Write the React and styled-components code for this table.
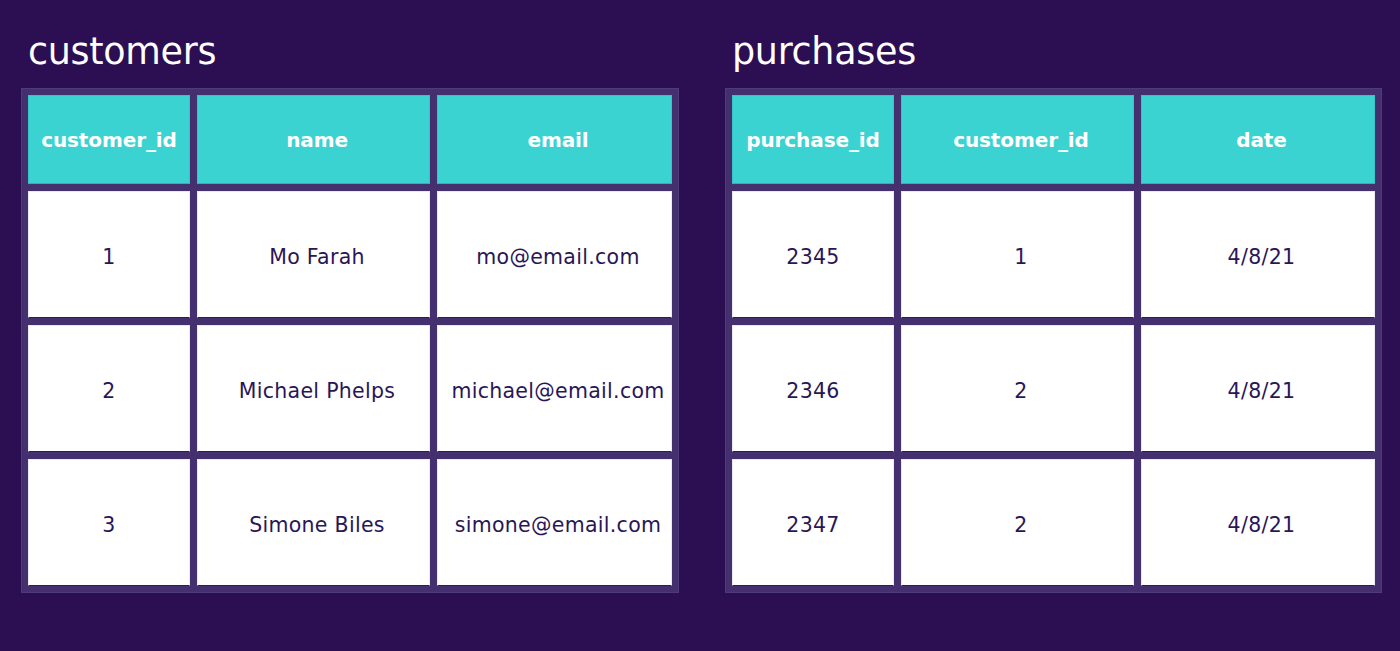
import React from 'react';
import styled, { createGlobalStyle } from 'styled-components';

const GlobalStyle = createGlobalStyle`
  body {
    margin: 0;
    background: #2b0f52;
    font-family: "DejaVu Sans", "Liberation Sans", sans-serif;
  }
`;

const Page = styled.main`
  display: flex;
  gap: 46px;
  padding: 30px 0 58px 21px;
  background: #2b0f52;
  min-height: 651px;
  box-sizing: border-box;
`;

const Section = styled.section`
  display: flex;
  flex-direction: column;
`;

const Title = styled.h2`
  margin: 0 0 14px;
  padding-left: 7px;
  font-size: 36.5px;
  line-height: 44px;
  font-weight: 400;
  color: #ffffff;
  letter-spacing: -0.3px;
`;

const Frame = styled.div`
  display: grid;
  grid-template-columns: ${(p) => p.$cols};
  grid-template-rows: 89px repeat(3, 127px);
  gap: 7px;
  padding: 7px;
  background: #45306f;
  box-shadow: inset 0 0 0 1px #4f3b7c;
`;

const Cell = styled.div`
  display: flex;
  align-items: center;
  justify-content: center;
  box-sizing: border-box;
  padding-top: ${(p) => (p.$head ? '0' : '5px')};
  padding-left: ${(p) => (p.$wide ? '7px' : '0')};
  border: 1px solid ${(p) => (p.$head ? '#36c4c6' : '#ece9f2')};
  border-bottom-color: ${(p) => (p.$head ? '#2fb0b6' : '#2e1862')};
  background: ${(p) => (p.$head ? '#3ad3d2' : '#ffffff')};
  color: ${(p) => (p.$head ? '#ffffff' : '#2a1657')};
  font-size: ${(p) => (p.$head ? '20px' : '20.5px')};
  font-weight: ${(p) => (p.$head ? 700 : 400)};
  letter-spacing: ${(p) => (p.$head ? '-0.1px' : '0.3px')};
  white-space: nowrap;
`;

const tables = [
  {
    title: 'customers',
    cols: '162px 233px 235px',
    head: ['customer_id', 'name', 'email'],
    rows: [
      ['1', 'Mo Farah', 'mo@email.com'],
      ['2', 'Michael Phelps', 'michael@email.com'],
      ['3', 'Simone Biles', 'simone@email.com'],
    ],
  },
  {
    title: 'purchases',
    cols: '162px 233px 234px',
    head: ['purchase_id', 'customer_id', 'date'],
    rows: [
      ['2345', '1', '4/8/21'],
      ['2346', '2', '4/8/21'],
      ['2347', '2', '4/8/21'],
    ],
  },
];

function Table({ title, cols, head, rows }) {
  return (
    <Section>
      <Title>{title}</Title>
      <Frame $cols={cols}>
        {head.map((h, j) => (
          <Cell key={h} $head $wide={j > 0}>{h}</Cell>
        ))}
        {rows.map((row, i) =>
          row.map((value, j) => (
            <Cell key={`${i}-${j}`} $wide={j > 0}>{value}</Cell>
          ))
        )}
      </Frame>
    </Section>
  );
}

export default function App() {
  return (
    <>
      <GlobalStyle />
      <Page>
        {tables.map((t) => (
          <Table key={t.title} {...t} />
        ))}
      </Page>
    </>
  );
}
